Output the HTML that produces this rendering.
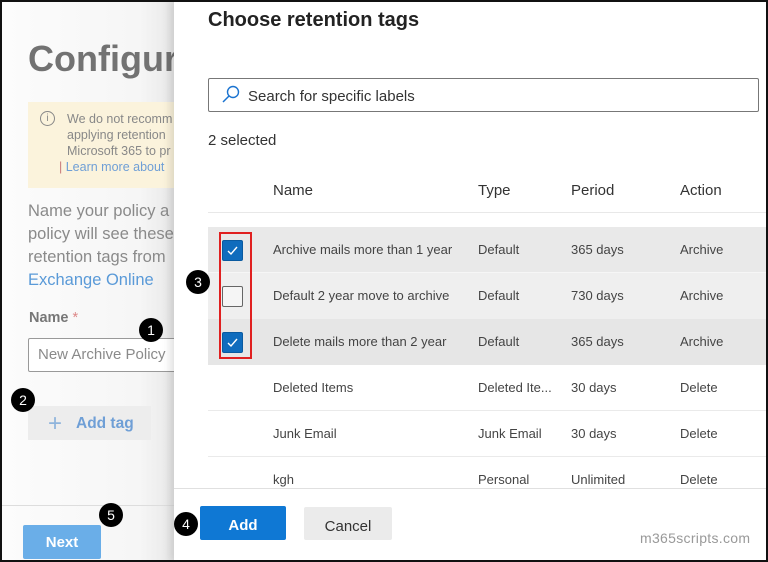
<!DOCTYPE html>
<html><head><style>
*{margin:0;padding:0;box-sizing:border-box}
body{width:768px;height:562px;overflow:hidden;position:relative;font-family:"Liberation Sans",sans-serif;background:#fff}
.frame{position:absolute;inset:0;border:2px solid #111;z-index:50;pointer-events:none}
.left{position:absolute;left:0;top:0;width:174px;height:562px;background:linear-gradient(90deg,#fcfcfc 0%,#f6f6f6 80%,#e8e8e8 100%);overflow:hidden}
.abs{position:absolute;white-space:nowrap}
.panel{position:absolute;left:174px;top:0;width:594px;height:562px;background:#fff;box-shadow:-4px 0 8px rgba(0,0,0,.12)}
.badge{position:absolute;width:24px;height:24px;border-radius:50%;background:#000;color:#fff;font-size:14px;text-align:center;line-height:24px;z-index:20}
.row{position:absolute;left:34px;width:560px;height:46px;font-size:13px;color:#444}
.row span{position:absolute;top:15px;white-space:nowrap}
.cb{position:absolute;left:14px;top:13px;width:21px;height:21px;border-radius:2px}
.cb.on{background:#0f6cbd;border:1px solid #0a5aa0}
.cb.off{border:1px solid #666;background:#f5f5f5}
</style></head><body>
<div class="left">
 <div class="abs" style="left:28px;top:38px;font-size:36px;font-weight:bold;color:#727272">Configure</div>
 <div style="position:absolute;left:28px;top:102px;width:160px;height:86px;background:#fbf3dc"></div>
 <div class="abs" style="left:40px;top:111px;width:15px;height:15px;border:1px solid #888;border-radius:50%;font-size:10px;color:#888;text-align:center;line-height:13px">i</div>
 <div class="abs" style="left:67px;top:111px;font-size:12.5px;color:#888;line-height:16px">We do not recomm<br>applying retention<br>Microsoft 365 to pr<br><span style="color:#c87a7a;margin-left:-8px">|</span> <span style="color:#6f9fd6">Learn more about</span></div>
 <div class="abs" style="left:28px;top:200px;font-size:16.5px;color:#8a8a8a;line-height:23px">Name your policy a<br>policy will see these<br>retention tags from<br><span style="color:#5a9ad8">Exchange Online</span></div>
 <div class="abs" style="left:29px;top:310px;font-size:14.5px;color:#777;font-weight:bold">Name <span style="color:#d88;font-weight:normal">*</span></div>
 <div style="position:absolute;left:28px;top:338px;width:160px;height:34px;border:1px solid #999;border-radius:2px;background:#fff"></div>
 <div class="abs" style="left:38px;top:346px;font-size:15px;color:#8a8a8a">New Archive Policy</div>
 <div style="position:absolute;left:28px;top:406px;width:123px;height:34px;background:#ededed"></div>
 <div class="abs" style="left:48px;top:410px;font-size:24px;color:#8fb4dc;font-weight:200">+</div>
 <div class="abs" style="left:76px;top:415px;font-size:15.5px;color:#6f9fd6;font-weight:bold">Add tag</div>
 <div style="position:absolute;left:0;top:505px;width:174px;height:1px;background:#ddd"></div>
 <div style="position:absolute;left:23px;top:525px;width:78px;height:34px;background:#6aaee8;border-radius:2px;color:#fff;font-weight:bold;font-size:15px;text-align:center;line-height:36px">Next</div>
</div>
<div class="badge" style="left:139px;top:318px">1</div>
<div class="badge" style="left:11px;top:388px">2</div>
<div class="badge" style="left:186px;top:270px">3</div>
<div class="badge" style="left:174px;top:512px">4</div>
<div class="badge" style="left:99px;top:503px">5</div>
<div class="panel">
 <div class="abs" style="left:34px;top:9px;font-size:20px;font-weight:bold;color:#222">Choose retention tags</div>
 <div style="position:absolute;left:34px;top:78px;width:551px;height:34px;border:1px solid #777;border-radius:2px"></div>
 <svg style="position:absolute;left:47px;top:84px" width="20" height="20" viewBox="0 0 20 20"><circle cx="12" cy="8" r="5.5" fill="none" stroke="#1a73d0" stroke-width="1.4"/><path d="M8 12 L2 18" stroke="#1a73d0" stroke-width="1.5"/></svg>
 <div class="abs" style="left:74px;top:88px;font-size:15px;color:#333">Search for specific labels</div>
 <div class="abs" style="left:34px;top:132px;font-size:15px;color:#333">2 selected</div>
 <div class="abs" style="left:99px;top:182px;font-size:15px;color:#333">Name</div>
 <div class="abs" style="left:304px;top:182px;font-size:15px;color:#333">Type</div>
 <div class="abs" style="left:397px;top:182px;font-size:15px;color:#333">Period</div>
 <div class="abs" style="left:506px;top:182px;font-size:15px;color:#333">Action</div>
 <div style="position:absolute;left:34px;top:212px;width:560px;height:1px;background:#e8e8e8"></div>
 <div class="row" style="top:227px;background:#e9e9e9;border-bottom:1px solid #f6f6f6"><div class="cb on"><svg width="19" height="19" viewBox="0 0 19 19"><path d="M5 10 L8 13 L14 6" fill="none" stroke="#fff" stroke-width="1.4"/></svg></div><span style="left:65px">Archive mails more than 1 year</span><span style="left:270px">Default</span><span style="left:363px">365 days</span><span style="left:472px">Archive</span></div>
 <div class="row" style="top:273px;background:#efefef"><div class="cb off"></div><span style="left:65px">Default 2 year move to archive</span><span style="left:270px">Default</span><span style="left:363px">730 days</span><span style="left:472px">Archive</span></div>
 <div class="row" style="top:319px;background:#e6e6e6"><div class="cb on"><svg width="19" height="19" viewBox="0 0 19 19"><path d="M5 10 L8 13 L14 6" fill="none" stroke="#fff" stroke-width="1.4"/></svg></div><span style="left:65px">Delete mails more than 2 year</span><span style="left:270px">Default</span><span style="left:363px">365 days</span><span style="left:472px">Archive</span></div>
 <div style="position:absolute;left:45px;top:232px;width:33px;height:127px;border:2px solid #e02020"></div>
 <div class="row" style="top:365px;border-bottom:1px solid #eaeaea"><span style="left:65px">Deleted Items</span><span style="left:270px">Deleted Ite...</span><span style="left:363px">30 days</span><span style="left:472px">Delete</span></div>
 <div class="row" style="top:411px;border-bottom:1px solid #eaeaea"><span style="left:65px">Junk Email</span><span style="left:270px">Junk Email</span><span style="left:363px">30 days</span><span style="left:472px">Delete</span></div>
 <div class="row" style="top:457px"><span style="left:65px">kgh</span><span style="left:270px">Personal</span><span style="left:363px">Unlimited</span><span style="left:472px">Delete</span></div>
 <div style="position:absolute;left:0;top:488px;width:594px;height:1px;background:#e0e0e0"></div>
 <div style="position:absolute;left:26px;top:506px;width:86px;height:34px;background:#0f78d4;border-radius:2px;color:#fff;font-weight:bold;font-size:15px;text-align:center;line-height:40px">Add</div>
 <div style="position:absolute;left:130px;top:507px;width:88px;height:33px;background:#ebebeb;border-radius:2px;color:#333;font-size:15px;text-align:center;line-height:39px">Cancel</div>
 <div class="abs" style="left:466px;top:530px;font-size:14px;color:#999;letter-spacing:.3px">m365scripts.com</div>
</div>
<div class="frame"></div>
</body></html>
